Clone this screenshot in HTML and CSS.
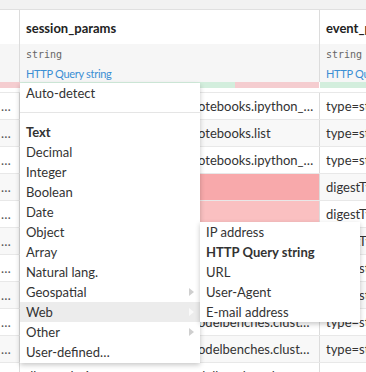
FILE: index.html
```html
<!DOCTYPE html>
<html>
<head>
<meta charset="utf-8">
<link rel="stylesheet" href="styles.css">
</head>
<body>
<div class="page">
  <div class="topbar"></div>
  <div class="row head">
    <div class="cell c1"></div>
    <div class="cell c2"><span class="colname">session_params</span></div>
    <div class="cell c3"><span class="colname">event_params</span></div>
  </div>
  <div class="row types">
    <div class="cell c1"></div>
    <div class="cell c2"><span class="stype">string</span><span class="mtype">HTTP Query string</span></div>
    <div class="cell c3"><span class="stype">string</span><span class="mtype">HTTP Query string</span></div>
  </div>
  <div class="row bar">
    <div class="cell c1 bad"></div>
    <div class="cell c2 split"><span class="ok" style="width:72%"></span><span class="bad" style="width:28%"></span></div>
    <div class="cell c3 ok"></div>
  </div>
  <div class="spacer"></div>
  <div class="row data"><div class="cell c1"><span class="dots">…</span></div><div class="cell c2"><span class="pre">dku.jupyter.n</span>otebooks.ipython_…</div><div class="cell c3">type=string</div></div>
  <div class="row data alt"><div class="cell c1"><span class="dots">…</span></div><div class="cell c2"><span class="pre">dku.jupyter.n</span>otebooks.list</div><div class="cell c3">type=string</div></div>
  <div class="row data"><div class="cell c1"><span class="dots">…</span></div><div class="cell c2"><span class="pre">dku.jupyter.n</span>otebooks.ipython_…</div><div class="cell c3">type=string</div></div>
  <div class="row data alt"><div class="cell c1"><span class="dots">…</span></div><div class="cell c2 pink1"></div><div class="cell c3">digestType=x</div></div>
  <div class="row data"><div class="cell c1"><span class="dots">…</span></div><div class="cell c2 pink2"></div><div class="cell c3">digestType=x</div></div>
  <div class="row data alt"><div class="cell c1"><span class="dots">…</span></div><div class="cell c2"><span class="pre">dku.analysis.m</span>odelbenches.clust…</div><div class="cell c3">digestType=x</div></div>
  <div class="row data"><div class="cell c1"><span class="dots">…</span></div><div class="cell c2"><span class="pre">dku.analysis.m</span>odelbenches.clust…</div><div class="cell c3">type=string</div></div>
  <div class="row data alt"><div class="cell c1"><span class="dots">…</span></div><div class="cell c2"><span class="pre">dku.analysis.m</span>odelbenches.clust…</div><div class="cell c3">type=string</div></div>
  <div class="row data"><div class="cell c1"><span class="dots">…</span></div><div class="cell c2"><span class="pre">dku.analysis.m</span>odelbenches.clust…</div><div class="cell c3">type=string</div></div>
  <div class="row data alt"><div class="cell c1"><span class="dots">…</span></div><div class="cell c2"><span class="pre">dku.analysis.m</span>odelbenches.clust…</div><div class="cell c3">type=string</div></div>
  <div class="row data"><div class="cell c1"><span class="dots">…</span></div><div class="cell c2"><span class="pre">dku.analysis.mo</span>delbenches.clust…</div><div class="cell c3">type=string</div></div>

  <ul class="menu">
    <li class="item">Auto-detect</li>
    <li class="divider"></li>
    <li class="item strong">Text</li>
    <li class="item">Decimal</li>
    <li class="item">Integer</li>
    <li class="item">Boolean</li>
    <li class="item">Date</li>
    <li class="item">Object</li>
    <li class="item">Array</li>
    <li class="item">Natural lang.</li>
    <li class="item sub">Geospatial</li>
    <li class="item sub active">Web</li>
    <li class="item sub">Other</li>
    <li class="item">User-defined…</li>
  </ul>
  <ul class="menu submenu">
    <li class="item">IP address</li>
    <li class="item strong">HTTP Query string</li>
    <li class="item">URL</li>
    <li class="item">User-Agent</li>
    <li class="item">E-mail address</li>
  </ul>
</div>
</body>
</html>
```
FILE: styles.css
```css
html, body {
  margin: 0;
  padding: 0;
  background: #fff;
}
.page {
  position: relative;
  width: 366px;
  height: 372px;
  overflow: hidden;
  font-family: Lato, "Liberation Sans", sans-serif;
  font-size: 13px;
  color: #333;
}
.topbar {
  height: 9px;
  background: #f2f2f2;
  border-bottom: 1px solid #e0e0e0;
}
.row {
  display: grid;
  grid-template-columns: 20px 300px 1fr;
}
.cell {
  border-right: 1px solid #dcdcdc;
  overflow: hidden;
  white-space: nowrap;
  box-sizing: border-box;
}
.c3 { border-right: none; }
.head { height: 34px; }
.head .cell { display: flex; align-items: center; padding-left: 6px; }
.head .c1 { padding: 0; }
.colname { font-weight: 700; font-size: 13px; color: #222; padding-top: 1px; }
.types { height: 38px; background: #f6f6f6; }
.types .cell { display: flex; flex-direction: column; padding: 3px 0 0 6px; }
.types .c1 { padding: 0; }
.stype { font-family: "DejaVu Sans Mono", monospace; font-size: 10px; color: #666; line-height: 15px; }
.mtype { font-size: 11px; letter-spacing: -0.3px; color: #3b8fd4; line-height: 16px; margin-top: 4px; }
.bar { height: 6px; }
.bar .cell { border-right-color: transparent; }
.split { display: flex; }
.split span { display: block; height: 100%; }
.ok { background: #d3eedd; }
.bad { background: #f5cdd0; }
.spacer { height: 4px; border-bottom: 1px solid #e8e8e8; }
.data { height: 27px; border-bottom: 1px solid #e8e8e8; box-sizing: border-box; }
.data.alt { background: #f8f8f8; }
.data .cell { display: flex; align-items: center; padding-left: 6px; font-size: 13px; color: #333; }
.data .c1 { padding-left: 1px; }
.dots { color: #555; }
.pre { display: inline-block; width: 172px; overflow: hidden; flex: none; }
.pink1 { background: #f8a9ab; }
.pink2 { background: #fac0c1; }
.menu {
  position: absolute;
  left: 20px;
  top: 83px;
  width: 180px;
  margin: 0;
  padding: 0 0 1px;
  list-style: none;
  background: #fff;
  box-shadow: 0 2px 5px rgba(0,0,0,0.22);
  z-index: 2;
}
.item {
  position: relative;
  height: 20px;
  line-height: 20px;
  padding-left: 6px;
  font-size: 13px;
  color: #333;
  white-space: nowrap;
}
.item.strong { font-weight: 700; }
.item.active { background: #ececec; }
.item.sub::after {
  content: "";
  position: absolute;
  right: 6px;
  top: 6px;
  border-left: 5px solid #cfcfcf;
  border-top: 4px solid transparent;
  border-bottom: 4px solid transparent;
}
.item.sub.active::after { border-left-color: #fafafa; }
.divider {
  height: 1px;
  background: #e5e5e5;
  margin: 9px 0 9px;
}
.submenu {
  left: 200px;
  top: 222px;
  width: 160px;
  padding: 0;
  z-index: 3;
}
```
